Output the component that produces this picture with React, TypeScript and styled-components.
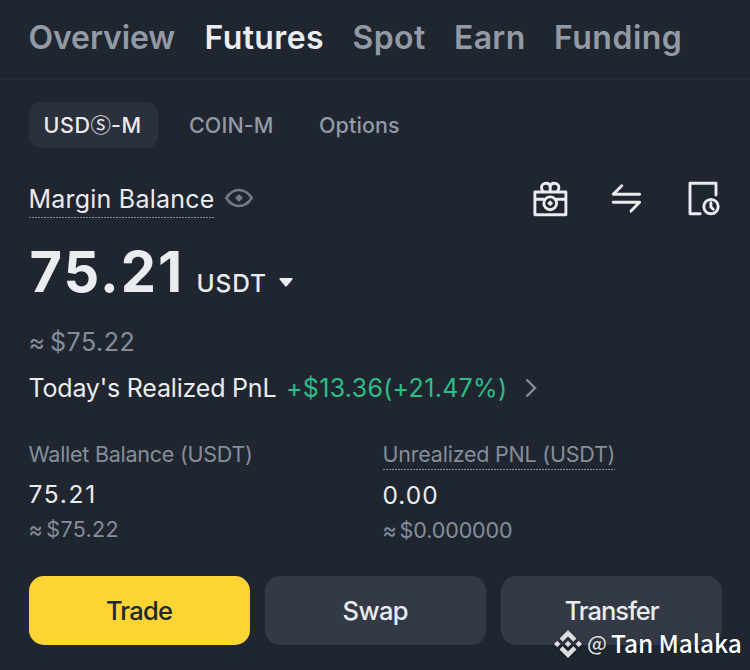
import React from "react";
import styled, { createGlobalStyle } from "styled-components";

const GlobalStyle = createGlobalStyle`
  * { box-sizing: border-box; }
  body {
    margin: 0;
    background: #202630;
    font-family: Inter, "Liberation Sans", sans-serif;
    color: #eaecef;
    overflow: hidden;
  }
`;

const Page = styled.main`
  position: relative;
  width: 750px;
  height: 670px;
  overflow: hidden;
  background: #202630;
  white-space: nowrap;
`;

const TopTabs = styled.nav`
  display: grid;
  grid-template-columns: 176px 148px 101.5px 100px 130px;
  height: 80px;
  padding: 17px 0 0 28.5px;
  border-bottom: 2px solid #252b35;
`;

const TopTab = styled.a<{ $active?: boolean; $spacing: number }>`
  font-size: 32px;
  line-height: 42px;
  font-weight: 600;
  letter-spacing: ${(p) => p.$spacing}px;
  color: ${(p) => (p.$active ? "#eaecef" : "#929aa5")};
`;

const Content = styled.section`
  padding: 22px 28px 0 28.5px;
`;

const Pills = styled.div`
  display: flex;
  gap: 16px;
  height: 46px;
`;

const Pill = styled.button<{ $active?: boolean; $width: number; $spacing: number }>`
  width: ${(p) => p.$width}px;
  padding: 1px 0 0 15px;
  border: 0;
  border-radius: 12px;
  text-align: left;
  white-space: nowrap;
  font: 500 21.5px/45px Inter, sans-serif;
  letter-spacing: ${(p) => p.$spacing}px;
  color: ${(p) => (p.$active ? "#eaecef" : "#929aa5")};
  background: ${(p) => (p.$active ? "#2b313c" : "transparent")};
`;

const Circled = styled.span`
  font-family: "Noto Sans CJK SC", sans-serif;
  font-size: 20.5px;
  font-weight: 400;
  line-height: 1;
  letter-spacing: 0;
`;

const BalanceHeader = styled.div`
  display: flex;
  align-items: center;
  height: 40px;
  margin-top: 31px;
`;

const dotted = `
  background: repeating-linear-gradient(90deg, #858d98 0 2px, transparent 2px 3px) left bottom / 100% 1px no-repeat;
`;

const BalanceTitle = styled.span`
  align-self: flex-start;
  width: 185.5px;
  height: 39px;
  padding-top: 2px;
  font-size: 25px;
  line-height: 36px;
  letter-spacing: 0.22px;
  ${dotted}
`;

const EyeIcon = styled.svg`
  width: 30px;
  height: 22px;
  margin: 0 0 2px 10px;
  fill: none;
  stroke: #737b87;
  stroke-width: 2.5;
`;

const Actions = styled.div`
  display: flex;
  gap: 41.5px;
  margin-left: auto;
  margin-right: -1px;
`;

const ActionIcon = styled.svg`
  width: 36px;
  height: 36px;
  fill: none;
  stroke: #eaecef;
  stroke-width: 2.9;
  stroke-linecap: round;
  stroke-linejoin: round;
`;

const AmountRow = styled.div`
  display: flex;
  align-items: baseline;
  height: 60px;
  margin-top: 23px;
`;

const Amount = styled.strong`
  width: 168px;
  padding-left: 1px;
  font-size: 56px;
  line-height: 60px;
  font-weight: 700;
  letter-spacing: 2px;
`;

const Currency = styled.span`
  font-size: 24.5px;
  font-weight: 500;
  letter-spacing: 0.9px;
`;

const Caret = styled.svg`
  width: 16px;
  height: 10px;
  margin-left: 11px;
  fill: #eaecef;
  transform: translateY(-4.5px);
`;

const Approx = styled.div`
  height: 40px;
  margin-top: 20px;
  font-size: 25px;
  line-height: 40px;
  letter-spacing: 0.5px;
  word-spacing: -3px;
  color: #858e9a;
`;

const PnlRow = styled.div`
  display: flex;
  align-items: center;
  height: 40px;
  margin-top: 6px;
  font-size: 25px;
  line-height: 40px;
`;

const PnlLabel = styled.span`
  width: 257.5px;
  letter-spacing: -0.2px;
`;

const PnlValue = styled.span`
  color: #2ebd85;
  letter-spacing: 0.3px;
`;

const Chevron = styled.svg`
  width: 14px;
  height: 22px;
  margin-left: 17px;
  fill: none;
  stroke: #858e9a;
  stroke-width: 2.4;
`;

const Stats = styled.div`
  display: grid;
  grid-template-columns: 354px 1fr;
  height: 106px;
  margin-top: 30px;
`;

const Stat = styled.div`
  display: flex;
  flex-direction: column;
  align-items: flex-start;
`;

const StatLabel = styled.span<{ $underlined?: boolean; $spacing: number }>`
  height: 32px;
  font-size: 21.5px;
  line-height: 32px;
  letter-spacing: ${(p) => p.$spacing}px;
  color: #858e9a;
  ${(p) => (p.$underlined ? dotted : "")}
`;

const StatValue = styled.span<{ $top: number; $spacing: number }>`
  margin-top: ${(p) => p.$top}px;
  font-size: 24.5px;
  line-height: 30px;
  letter-spacing: ${(p) => p.$spacing}px;
`;

const StatApprox = styled.span<{ $spacing: number }>`
  margin-top: 6px;
  font-size: 21.5px;
  line-height: 28px;
  letter-spacing: ${(p) => p.$spacing}px;
  word-spacing: -3px;
  color: #858e9a;
`;

const Buttons = styled.div`
  display: grid;
  grid-template-columns: repeat(3, 221px);
  gap: 15.3px;
  margin-top: 32px;
`;

const Button = styled.button<{ $primary?: boolean; $spacing: number }>`
  height: 69px;
  padding: 0;
  border: 0;
  border-radius: 15px;
  font: 500 25.5px/69px Inter, sans-serif;
  letter-spacing: ${(p) => p.$spacing}px;
  color: ${(p) => (p.$primary ? "#202630" : "#eaecef")};
  background: ${(p) => (p.$primary ? "#fcd535" : "#333a45")};
`;

const Watermark = styled.div`
  position: absolute;
  left: 554px;
  top: 624px;
  display: flex;
  align-items: center;
  height: 40px;
  font-family: "Noto Sans CJK SC", sans-serif;
  font-weight: 500;
  color: #fff;
  text-shadow: 0 0 2px rgba(0, 0, 0, 0.5);
`;

const Logo = styled.svg`
  width: 28px;
  height: 28px;
  fill: #dcdee0;
  filter: drop-shadow(0 1px 1px rgba(0, 0, 0, 0.5));
`;

const At = styled.span`
  width: 24px;
  margin-left: 5px;
  padding-bottom: 4px;
  font-size: 20.5px;
  line-height: 36px;
  color: #dcdee0;
`;

const Author = styled.span`
  padding-bottom: 3px;
  font-size: 24.5px;
  line-height: 37px;
  letter-spacing: -0.1px;
`;

export default function App() {
  return (
    <Page>
      <GlobalStyle />
      <TopTabs>
        <TopTab $spacing={-0.1}>Overview</TopTab>
        <TopTab $active $spacing={0.4}>Futures</TopTab>
        <TopTab $spacing={0.4}>Spot</TopTab>
        <TopTab $spacing={0.3}>Earn</TopTab>
        <TopTab $spacing={0.5}>Funding</TopTab>
      </TopTabs>
      <Content>
        <Pills>
          <Pill $active $width={129.5} $spacing={0.55}>USD<Circled>Ⓢ</Circled>-M</Pill>
          <Pill $width={114} $spacing={0.1}>COIN-M</Pill>
          <Pill $width={112} $spacing={0.1}>Options</Pill>
        </Pills>
        <BalanceHeader>
          <BalanceTitle>Margin Balance</BalanceTitle>
          <EyeIcon viewBox="0 0 30 22">
            <path d="M2.3 11C5.5 6 10 3 15 3s9.500 3 12.700 8C24.500 16 20 19 15 19S5.500 16 2.300 11z" />
            <path d="M15 7l4 4-4 4-4-4z" fill="#737b87" stroke="none" />
          </EyeIcon>
          <Actions>
            <ActionIcon viewBox="0 0 36 36">
              <path d="M2.900 11h31v22.700h-31zM2.900 18.300h8.500M25.200 18.300h8.600" />
              <path d="M18.200 10.500V6.500c0-2.500-1.700-4.200-4.200-4.200S9.500 4 9.500 6.500c0 1.600.6 3 1.800 4M18.200 6.500c0-2.500 1.700-4.200 4.200-4.200s4.500 1.700 4.500 4.200c0 1.600-.6 3-1.800 4" />
              <circle cx="18.200" cy="22.300" r="6.400" />
              <path d="M18.200 19.300l3 3-3 3-3-3z" fill="#eaecef" stroke="none" />
            </ActionIcon>
            <ActionIcon viewBox="0 0 36 36">
              <path d="M11.800 4.800L3.200 13.300H29.600M3.200 21.300H29.600l-8.600 8.800" />
            </ActionIcon>
            <ActionIcon viewBox="0 0 36 36">
              <path d="M29 14V2.300H3V32.700h10.200" />
              <circle cx="24" cy="25.600" r="7.200" />
              <path d="M23.900 21.800v4.200l2.300 2.200" />
            </ActionIcon>
          </Actions>
        </BalanceHeader>
        <AmountRow>
          <Amount>75.21</Amount>
          <Currency>USDT</Currency>
          <Caret viewBox="0 0 16 10">
            <path d="M2.200.5h11.600c.8 0 1.200.8.600 1.400L8.800 8.700c-.4.500-1.200.5-1.600 0L1.600 1.900C1 1.300 1.400.5 2.200.5z" />
          </Caret>
        </AmountRow>
        <Approx>≈ $75.22</Approx>
        <PnlRow>
          <PnlLabel>Today's Realized PnL</PnlLabel>
          <PnlValue>+$13.36(+21.47%)</PnlValue>
          <Chevron viewBox="0 0 14 22">
            <path d="M2.500 2.500l8.500 8.500-8.500 8.500" />
          </Chevron>
        </PnlRow>
        <Stats>
          <Stat>
            <StatLabel $spacing={-0.25}>Wallet Balance (USDT)</StatLabel>
            <StatValue $top={9} $spacing={1.7}>75.21</StatValue>
            <StatApprox $spacing={0.3}>≈ $75.22</StatApprox>
          </Stat>
          <Stat>
            <StatLabel $underlined $spacing={-0.22}>Unrealized PNL (USDT)</StatLabel>
            <StatValue $top={10} $spacing={1}>0.00</StatValue>
            <StatApprox $spacing={-0.1}>≈ $0.000000</StatApprox>
          </Stat>
        </Stats>
        <Buttons>
          <Button $primary $spacing={-0.8}>Trade</Button>
          <Button $spacing={-0.6}>Swap</Button>
          <Button $spacing={-1.05}>Transfer</Button>
        </Buttons>
      </Content>
      <Watermark>
        <Logo viewBox="0 0 28 28">
          <path d="M14 0l8.500 8.500-3.200 3.200L14 6.400l-5.300 5.300-3.200-3.200zM14 28l8.500-8.500-3.200-3.200-5.300 5.300-5.300-5.300-3.200 3.200zM3.200 10.800L6.400 14l-3.200 3.200L0 14zM24.800 10.800L28 14l-3.200 3.200-3.200-3.200zM14 10.800l3.200 3.200-3.200 3.200-3.200-3.200z" />
        </Logo>
        <At>@</At>
        <Author>Tan Malaka</Author>
      </Watermark>
    </Page>
  );
}
